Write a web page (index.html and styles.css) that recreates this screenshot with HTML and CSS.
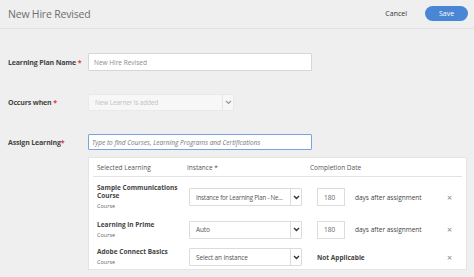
FILE: index.html
```html
<!DOCTYPE html>
<html>
<head>
<meta charset="utf-8">
<link rel="stylesheet" href="styles.css">
</head>
<body>
<div class="header">
  <div class="title">New Hire Revised</div>
  <div class="actions">
    <span class="cancel">Cancel</span>
    <span class="save">Save</span>
  </div>
</div>
<div class="form">
  <div class="field f1">
    <div class="label">Learning Plan Name <span class="req">*</span></div>
    <div class="input name">New Hire Revised</div>
  </div>
  <div class="field f2">
    <div class="label">Occurs when <span class="req">*</span></div>
    <div class="select disabled"><span class="val">New Learner is added</span><span class="chev"><svg width="7" height="5" viewBox="0 0 7 5"><path d="M1 1l2.5 2.5L6 1" fill="none" stroke="#999" stroke-width="1.2"/></svg></span></div>
  </div>
  <div class="field f3">
    <div class="label">Assign Learning<span class="req">*</span></div>
    <div class="input search">Type to find Courses, Learning Programs and Certifications</div>
  </div>
  <div class="card">
    <div class="thead">
      <div class="c1">Selected Learning</div>
      <div class="c2">Instance *</div>
      <div class="c3">Completion Date</div>
    </div>
    <div class="row r1">
      <div class="c1"><div class="lname">Sample Communications Course</div><div class="ltype">Course</div></div>
      <div class="c2"><div class="select"><span class="val">Instance for Learning Plan - Ne...</span><span class="chev"><svg width="7" height="5" viewBox="0 0 7 5"><path d="M1 1l2.5 2.5L6 1" fill="none" stroke="#333" stroke-width="1.4"/></svg></span></div></div>
      <div class="c3"><div class="days">180</div><span class="after">days after assignment</span></div>
      <div class="c4">×</div>
    </div>
    <div class="row r2">
      <div class="c1"><div class="lname">Learning in Prime</div><div class="ltype">Course</div></div>
      <div class="c2"><div class="select"><span class="val">Auto</span><span class="chev"><svg width="7" height="5" viewBox="0 0 7 5"><path d="M1 1l2.5 2.5L6 1" fill="none" stroke="#333" stroke-width="1.4"/></svg></span></div></div>
      <div class="c3"><div class="days">180</div><span class="after">days after assignment</span></div>
      <div class="c4">×</div>
    </div>
    <div class="row r3">
      <div class="c1"><div class="lname">Adobe Connect Basics</div><div class="ltype">Course</div></div>
      <div class="c2"><div class="select"><span class="val">Select an Instance</span><span class="chev"><svg width="7" height="5" viewBox="0 0 7 5"><path d="M1 1l2.5 2.5L6 1" fill="none" stroke="#333" stroke-width="1.4"/></svg></span></div></div>
      <div class="c3"><span class="na">Not Applicable</span></div>
      <div class="c4">×</div>
    </div>
  </div>
</div>
</body>
</html>
```
FILE: styles.css
```css
* { box-sizing: border-box; }
body {
  margin: 0;
  background: #efefef;
  font-family: "Open Sans", "Noto Sans", sans-serif;
  color: #4b4b4b;
  width: 474px;
  height: 277px;
  overflow: hidden;
}
.header {
  height: 29px;
  border-bottom: 1px solid #e2e2e2;
  display: flex;
  align-items: center;
  justify-content: space-between;
  padding: 0 6px 1px 8px;
}
.title {
  font-size: 10.5px;
  color: #6e6e6e;
  letter-spacing: -0.2px;
}
.actions { display: flex; align-items: center; }
.cancel {
  font-size: 7px;
  color: #333;
  margin-right: 18px;
}
.save {
  width: 43px;
  height: 15px;
  border-radius: 8px;
  background: #4a86d6;
  color: #fff;
  font-size: 7px;
  display: flex;
  align-items: center;
  justify-content: center;
}
.form { padding: 24px 7px 0 8px; }
.field {
  display: flex;
  align-items: center;
}
.label {
  width: 80px;
  font-size: 7px;
  font-weight: 700;
  color: #444;
  letter-spacing: -0.15px;
}
.req { color: #d7373f; }
.input {
  height: 18px;
  border: 1px solid #d6d6d6;
  background: #fff;
  font-size: 6.5px;
  color: #8c8c8c;
  padding-left: 5px;
  display: flex;
  align-items: center;
  border-radius: 1px;
}
.name { width: 224px; }
.f2 { margin-top: 23px; }
.f3 { margin-top: 23px; }
.search {
  width: 224px;
  height: 16px;
  border-color: #7aa3dd;
  font-style: italic;
  color: #777;
  padding-left: 3px;
}
.select {
  height: 18px;
  border: 1px solid #dcdcdc;
  background: #fff;
  display: flex;
  align-items: stretch;
  font-size: 6.5px;
  color: #555;
  border-radius: 1px;
}
.select .val {
  flex: 1;
  display: flex;
  align-items: center;
  padding-left: 6px;
  white-space: nowrap;
  overflow: hidden;
  letter-spacing: -0.15px;
}
.select .chev {
  width: 11px;
  flex: none;
  border-left: 1px solid #dcdcdc;
  display: flex;
  align-items: center;
  justify-content: center;
}
.disabled {
  width: 146px;
  height: 17px;
  background: #f7f7f7;
  border-color: #e9e9e9;
  color: #c2c2c2;
}
.disabled .chev { border-left-color: #e6e6e6; }
.card {
  margin: 7px 0 0 80px;
  width: 379px;
  height: 113px;
  background: #fff;
  border: 1px solid #e4e4e4;
  padding: 0 4px;
}
.thead {
  display: flex;
  align-items: center;
  height: 19px;
  border-bottom: 1px solid #e3e3e3;
  font-size: 6.5px;
  color: #555;
}
.thead .c1 { width: 94px; padding-left: 4px; }
.thead .c2 { width: 123px; }
.row {
  display: flex;
  align-items: center;
}
.row .c1 { width: 96px; padding-left: 4px; }
.row .c2 { width: 128px; }
.row .c2 .select { width: 113px; }
.row .c3 { width: 130px; display: flex; align-items: center; }
.row .c4 { font-size: 9px; color: #888; }
.r1 { height: 38px; margin-top: 1px; }
.r2 { height: 27px; }
.r3 { height: 28px; }
.lname {
  font-size: 6.5px;
  font-weight: 700;
  color: #444;
  line-height: 8px;
}
.ltype {
  font-size: 5.5px;
  color: #666;
  margin-top: 2px;
}
.r1 .val { font-size: 6.2px; letter-spacing: -0.2px; }
.days {
  width: 28px;
  height: 18px;
  border: 1px solid #dcdcdc;
  font-size: 6.5px;
  color: #666;
  display: flex;
  align-items: center;
  padding-left: 6px;
  margin-right: 10px;
}
.after { font-size: 6.5px; color: #444; }
.na { font-size: 6.5px; font-weight: 700; color: #444; }
```
